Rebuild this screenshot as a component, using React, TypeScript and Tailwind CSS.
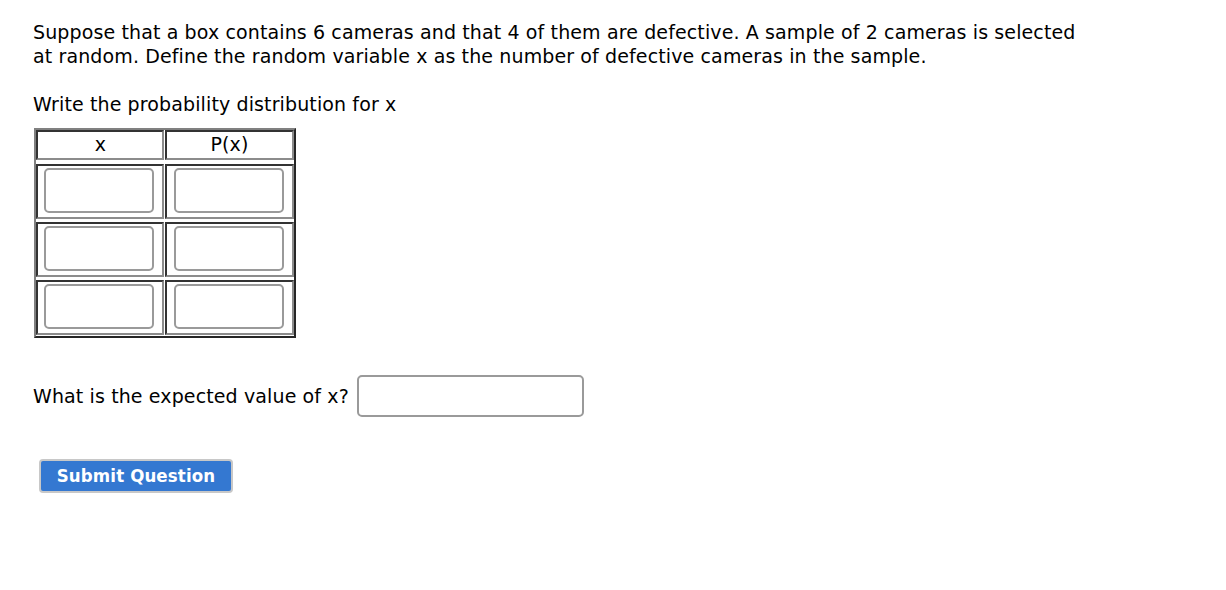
import React from "react";

const font = { fontFamily: '"DejaVu Sans", sans-serif' };
const btnFont = { fontFamily: '"DejaVu Sans Condensed", "DejaVu Sans", sans-serif' };

function Cell({ children, w }: { children?: React.ReactNode; w: string }) {
  return (
    <div
      className={`${w} border-2 border-t-[#333333] border-l-[#333333] border-b-[#8c8c8c] border-r-[#8c8c8c] box-border`}
    >
      {children}
    </div>
  );
}

function InputCell({ w, pl }: { w: string; pl: string }) {
  return (
    <Cell w={w}>
      <div className={`h-full ${pl} pt-[2px]`}>
        <input className="w-[110px] h-[45px] border-2 border-[#9a9a9a] rounded-[5px] bg-white outline-none" />
      </div>
    </Cell>
  );
}

export default function App() {
  return (
    <div className="w-[1226px] h-[590px] bg-white text-black pl-[33px] pt-[20px] tracking-[0.12px]" style={font}>
      <div className="text-[19px] leading-[24px] w-[1150px]">
        Suppose that a box contains 6 cameras and that 4 of them are defective. A sample of 2 cameras is selected
        <br />
        at random. Define the random variable x as the number of defective cameras in the sample.
      </div>
      <div className="text-[19px] leading-[24px] mt-[24px]">Write the probability distribution for x</div>
      <div className="mt-[12px] ml-[1px] w-[262px] h-[210px] border-2 border-t-[#808080] border-l-[#808080] border-b-[#262626] border-r-[#262626] box-border px-0 flex flex-col">
        <div className="flex gap-[1px] h-[30px]">
          <Cell w="w-[128px] h-[30px]">
            <div className="text-[19px] leading-[24px] text-center pl-[1px]">x</div>
          </Cell>
          <Cell w="w-[129px] h-[30px]">
            <div className="text-[19px] leading-[24px] text-center">P(x)</div>
          </Cell>
        </div>
        <div className="flex flex-col gap-[3px] mt-[4px]">
          {[0, 1, 2].map((i) => (
            <div key={i} className="flex gap-[1px] h-[55px]">
              <InputCell w="w-[128px] h-[55px]" pl="pl-[6px]" />
              <InputCell w="w-[129px] h-[55px]" pl="pl-[7px]" />
            </div>
          ))}
        </div>
      </div>
      <div className="flex items-center mt-[37px] h-[42px]">
        <span className="text-[19px] leading-[24px] mr-[8px]">What is the expected value of x?</span>
        <input className="w-[227px] h-[42px] border-2 border-[#9a9a9a] rounded-[5px] bg-white outline-none" />
      </div>
      <button
        className="mt-[42px] ml-[6px] w-[194px] h-[34px] bg-[#3478d1] text-white text-[18.5px] font-bold leading-[24px] rounded-[4px] border-2 border-[#c8c8c8] flex items-center justify-center"
        style={btnFont}
      >
        Submit Question
      </button>
    </div>
  );
}
